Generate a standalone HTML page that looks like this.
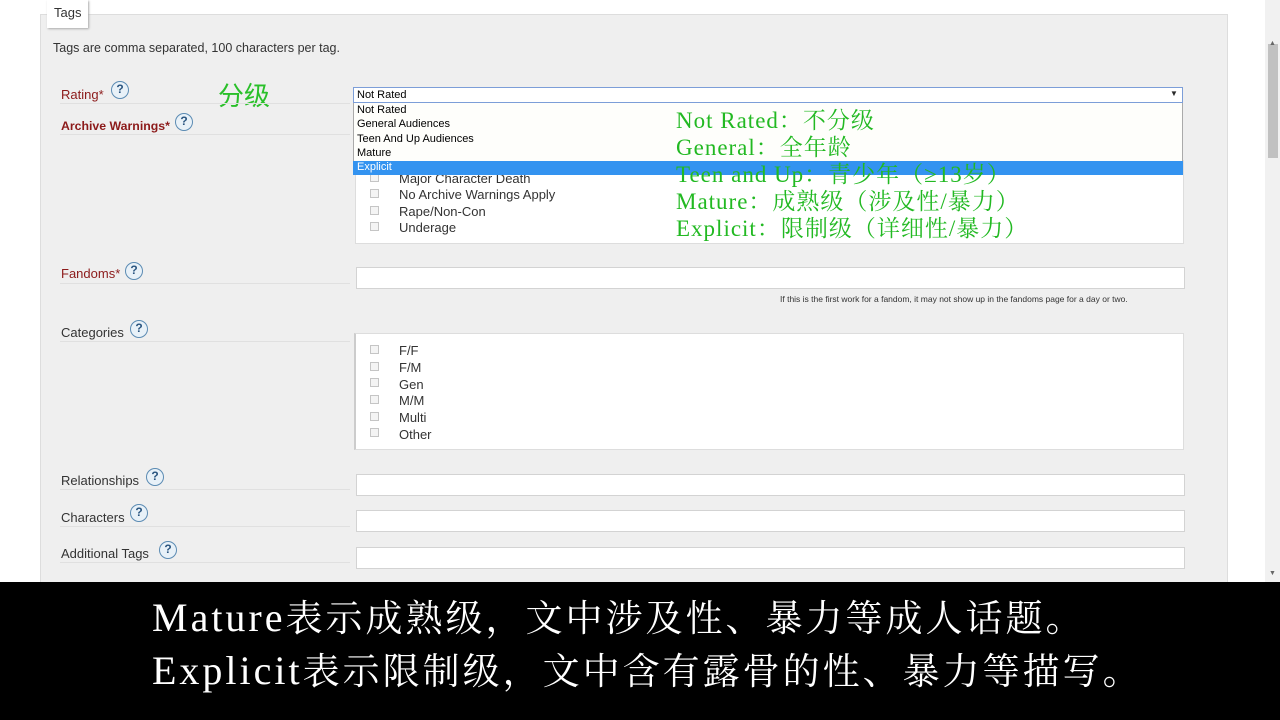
<!DOCTYPE html>
<html><head><meta charset="utf-8">
<style>
*{margin:0;padding:0;box-sizing:border-box}
body{width:1280px;height:720px;overflow:hidden;background:#fff;position:relative;font-family:"Liberation Sans","Noto Sans CJK SC",sans-serif;color:#2a2a2a}
.abs{position:absolute}
.panel{left:40px;top:14px;width:1188px;height:580px;background:#efefef;border:1px solid #ddd}
.legend{left:47px;top:0;width:41px;height:28px;background:#fff;box-shadow:1px 1px 2px #aaa;font-size:13px;padding:5px 0 0 7px;color:#333}
.lbl{font-size:13px;color:#333;left:61px}
.red{color:#8c1a1a}
.line{left:60px;width:290px;height:1px;background:#e0e0e0}
.q{width:18px;height:18px;border:1.5px solid #5b8bb3;border-radius:50%;background:#e8f1f8;color:#2a5580;font-size:12px;font-weight:bold;text-align:center;line-height:15px}
.inp{left:356px;width:829px;height:22px;background:#fff;border:1px solid #d3d3d3}
.cb{width:9px;height:9px;border:1px solid #c5c5c5;background:#f4f4f4;left:370px}
.opt{font-size:13px;color:#333;left:399px}
.g{color:#22b922;font-family:"Liberation Serif","Noto Serif CJK SC",serif;font-size:23px;left:676px;line-height:27px;letter-spacing:1px;white-space:nowrap}
.dd{font-size:11px;left:357px;color:#000}
.sub{left:152px;font-size:37px;color:#fff;font-family:'Liberation Serif','Noto Serif CJK SC',serif;white-space:nowrap;letter-spacing:3px}
.sub span{letter-spacing:3px;font-size:40px}
</style></head><body>
<div class="abs panel"></div>
<div class="abs legend">Tags</div>
<div class="abs" style="left:53px;top:41px;font-size:12.5px;color:#333">Tags are comma separated, 100 characters per tag.</div>

<div class="abs lbl red" style="top:87px">Rating*</div><div class="abs q" style="left:111px;top:81px">?</div>
<div class="abs" style="left:218px;top:76px;font-size:26px;color:#2ac02a;font-family:'Noto Sans CJK SC',sans-serif">分级</div>
<div class="abs line" style="top:103px"></div>
<div class="abs lbl red" style="top:119px;font-weight:bold;font-size:12.3px">Archive Warnings*</div><div class="abs q" style="left:175px;top:113px">?</div>
<div class="abs line" style="top:134px"></div>

<div class="abs" style="left:355px;top:160px;width:829px;height:84px;background:#fff;border:1px solid #ddd"></div>
<div class="abs cb" style="top:173px"></div><div class="abs opt" style="top:171px">Major Character Death</div>
<div class="abs cb" style="top:189px"></div><div class="abs opt" style="top:187px">No Archive Warnings Apply</div>
<div class="abs cb" style="top:206px"></div><div class="abs opt" style="top:204px">Rape/Non-Con</div>
<div class="abs cb" style="top:222px"></div><div class="abs opt" style="top:220px">Underage</div>

<div class="abs" style="left:353px;top:87px;width:830px;height:16px;background:#fff;border:1px solid #7c9ed8"></div>
<div class="abs dd" style="top:89px">Not Rated</div>
<div class="abs" style="left:1170px;top:89px;font-size:8px">▼</div>
<div class="abs" style="left:353px;top:103px;width:830px;height:72px;background:#fefefb;border-left:1px solid #aaa;border-right:1px solid #aaa"></div>
<div class="abs" style="left:353px;top:161px;width:830px;height:14px;background:#3393f0"></div>
<div class="abs dd" style="top:104px">Not Rated</div>
<div class="abs dd" style="top:118px">General Audiences</div>
<div class="abs dd" style="top:133px">Teen And Up Audiences</div>
<div class="abs dd" style="top:147px">Mature</div>
<div class="abs dd" style="top:161px;color:#fff">Explicit</div>
<div class="abs g" style="top:107px">Not Rated：不分级</div>
<div class="abs g" style="top:134px">General：全年龄</div>
<div class="abs g" style="top:161px">Teen and Up：青少年（≥13岁）</div>
<div class="abs g" style="top:188px">Mature：成熟级（涉及性/暴力）</div>
<div class="abs g" style="top:215px">Explicit：限制级（详细性/暴力）</div>

<div class="abs lbl red" style="top:266px">Fandoms*</div><div class="abs q" style="left:125px;top:262px">?</div>
<div class="abs line" style="top:283px"></div>
<div class="abs inp" style="top:267px"></div>
<div class="abs" style="left:780px;top:294px;font-size:8.5px;color:#333">If this is the first work for a fandom, it may not show up in the fandoms page for a day or two.</div>

<div class="abs lbl" style="top:325px">Categories</div><div class="abs q" style="left:130px;top:320px">?</div>
<div class="abs line" style="top:341px"></div>
<div class="abs" style="left:354px;top:333px;width:830px;height:117px;background:#fff;border:1px solid #ddd;border-left:2px solid #ccc"></div>
<div class="abs cb" style="top:345px"></div><div class="abs opt" style="top:343px">F/F</div>
<div class="abs cb" style="top:362px"></div><div class="abs opt" style="top:360px">F/M</div>
<div class="abs cb" style="top:378px"></div><div class="abs opt" style="top:377px">Gen</div>
<div class="abs cb" style="top:395px"></div><div class="abs opt" style="top:393px">M/M</div>
<div class="abs cb" style="top:412px"></div><div class="abs opt" style="top:410px">Multi</div>
<div class="abs cb" style="top:428px"></div><div class="abs opt" style="top:427px">Other</div>

<div class="abs lbl" style="top:473px">Relationships</div><div class="abs q" style="left:146px;top:468px">?</div>
<div class="abs line" style="top:489px"></div>
<div class="abs inp" style="top:474px"></div>
<div class="abs lbl" style="top:510px">Characters</div><div class="abs q" style="left:130px;top:504px">?</div>
<div class="abs line" style="top:526px"></div>
<div class="abs inp" style="top:510px"></div>
<div class="abs lbl" style="top:546px">Additional Tags</div><div class="abs q" style="left:159px;top:541px">?</div>
<div class="abs line" style="top:562px"></div>
<div class="abs inp" style="top:547px"></div>

<div class="abs" style="left:1265px;top:0;width:15px;height:582px;background:#f1f1f1"></div>
<div class="abs" style="left:1268px;top:44px;width:10px;height:114px;background:#c1c1c1"></div>
<div class="abs" style="left:1269px;top:40px;font-size:7px;color:#666">▲</div>
<div class="abs" style="left:1269px;top:570px;font-size:7px;color:#666">▼</div>

<div class="abs" style="left:0;top:582px;width:1280px;height:138px;background:#000"></div>
<div class="abs sub" style="top:588px"><span>Mature</span>表示成熟级，文中涉及性、暴力等成人话题。</div>
<div class="abs sub" style="top:641px"><span>Explicit</span>表示限制级，文中含有露骨的性、暴力等描写。</div>
</body></html>
